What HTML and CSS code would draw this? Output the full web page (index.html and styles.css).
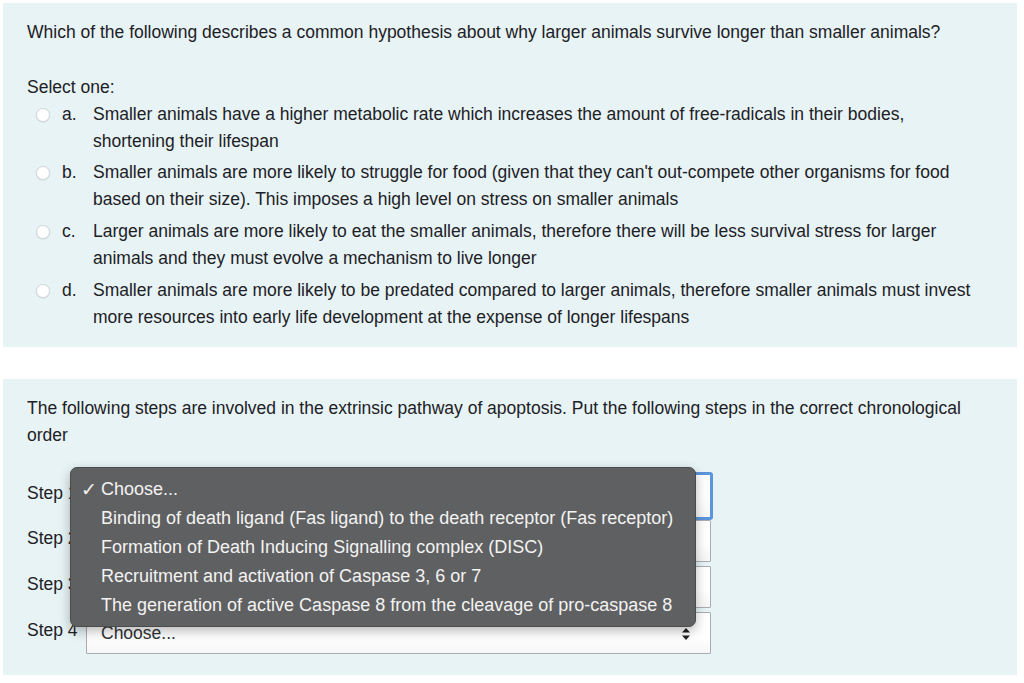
FILE: index.html
```html
<!DOCTYPE html>
<html>
<head>
<meta charset="utf-8">
<link rel="stylesheet" href="styles.css">
</head>
<body>
<div class="que">
  <div class="qtext">Which of the following describes a common hypothesis about why larger animals survive longer than smaller animals?</div>
  <div class="prompt">Select one:</div>
  <div class="answer">
    <div class="opt"><span class="radio"></span><span class="letter">a.</span><span class="otext">Smaller animals have a higher metabolic rate which increases the amount of free-radicals in their bodies, shortening their lifespan</span></div>
    <div class="opt"><span class="radio"></span><span class="letter">b.</span><span class="otext">Smaller animals are more likely to struggle for food (given that they can't out-compete other organisms for food based on their size). This imposes a high level on stress on smaller animals</span></div>
    <div class="opt"><span class="radio"></span><span class="letter">c.</span><span class="otext">Larger animals are more likely to eat the smaller animals, therefore there will be less survival stress for larger animals and they must evolve a mechanism to live longer</span></div>
    <div class="opt"><span class="radio"></span><span class="letter">d.</span><span class="otext">Smaller animals are more likely to be predated compared to larger animals, therefore smaller animals must invest more resources into early life development at the expense of longer lifespans</span></div>
  </div>
</div>
<div class="que que2">
  <div class="qtext">The following steps are involved in the extrinsic pathway of apoptosis. Put the following steps in the correct chronological order</div>
  <div class="steps">
    <div class="row"><span class="label">Step 1</span><div class="select focused"><span class="sel-text">Choose...</span></div></div>
    <div class="row"><span class="label">Step 2</span><div class="select"><span class="sel-text">Choose...</span></div></div>
    <div class="row"><span class="label">Step 3</span><div class="select"><span class="sel-text">Choose...</span></div></div>
    <div class="row"><span class="label">Step 4</span><div class="select"><span class="sel-text">Choose...</span><svg class="arrows" width="10" height="14" viewBox="0 0 10 14"><path d="M5 1 L9 5.5 H1 Z M5 13 L9 8.5 H1 Z" fill="#222"/></svg></div></div>
    <div class="popup">
      <div class="item"><span class="check">✓</span>Choose...</div>
      <div class="item">Binding of death ligand (Fas ligand) to the death receptor (Fas receptor)</div>
      <div class="item">Formation of Death Inducing Signalling complex (DISC)</div>
      <div class="item">Recruitment and activation of Caspase 3, 6 or 7</div>
      <div class="item">The generation of active Caspase 8 from the cleavage of pro-caspase 8</div>
    </div>
  </div>
</div>
</body>
</html>
```

FILE: styles.css
```css
html, body {
  margin: 0;
  padding: 0;
  background: #ffffff;
}
body {
  font-family: "Liberation Sans", Arial, sans-serif;
  font-size: 17.5px;
  line-height: 27px;
  color: #1d2125;
  padding-top: 3px;
}
.que {
  margin: 0 7px 0 3px;
  background: #e7f3f5;
  padding: 15.5px 24px 16.5px 24px;
}
.que2 {
  margin-top: 32px;
  padding-top: 15.5px;
  padding-bottom: 21px;
}
.prompt {
  margin-top: 28px;
}
.answer {
  display: flex;
  flex-direction: column;
  gap: 4.7px;
  padding-right: 15px;
}
.opt {
  display: grid;
  grid-template-columns: 14px 19px 1fr;
  column-gap: 12px;
  padding-left: 9px;
}
.radio {
  width: 14px;
  height: 14px;
  box-sizing: border-box;
  border-radius: 50%;
  background: #fff;
  border: 1px solid #d4d7da;
  box-shadow: 0 0.5px 1px rgba(0,0,0,0.12);
  margin-top: 7px;
}
.letter {
  display: block;
  white-space: nowrap;
}
.steps {
  position: relative;
  margin-top: 26px;
  display: flex;
  flex-direction: column;
  gap: 3.7px;
}
.row {
  display: flex;
  align-items: flex-start;
  height: 42px;
}
.label {
  width: 59px;
  padding-top: 5px;
  flex: none;
  white-space: nowrap;
  overflow: hidden;
}
.select {
  width: 625px;
  height: 42px;
  box-sizing: border-box;
  border: 1px solid #a9adb2;
  background: linear-gradient(#ffffff 60%, #f6f6f6);
  display: flex;
  align-items: center;
  justify-content: space-between;
  padding: 2px 19px 0 14px;
  border-radius: 1px;
}
.select.focused {
  border: 3px solid #5b95dc;
  width: 628px;
  height: 48px;
  margin-top: -3px;
  margin-left: -1px;
  border-radius: 3px;
}
.sel-text {
  color: #303336;
}
.arrows {
  display: block;
  margin-top: 1px;
}
.popup {
  position: absolute;
  left: 43px;
  top: -8px;
  width: 626px;
  box-sizing: border-box;
  padding: 7px 0 6px 0;
  background: #5f6061;
  border: 1px solid #4a4c4d;
  border-radius: 7px;
  box-shadow: 0 4px 12px rgba(0,0,0,0.28);
  color: #f3f3f3;
}
.item {
  height: 29px;
  line-height: 29px;
  padding-left: 30px;
  position: relative;
  white-space: nowrap;
  font-size: 18px;
}
.check {
  position: absolute;
  left: 10px;
  top: 0;
  font-size: 19px;
  font-weight: bold;
  font-family: "DejaVu Sans", sans-serif;
}
```
